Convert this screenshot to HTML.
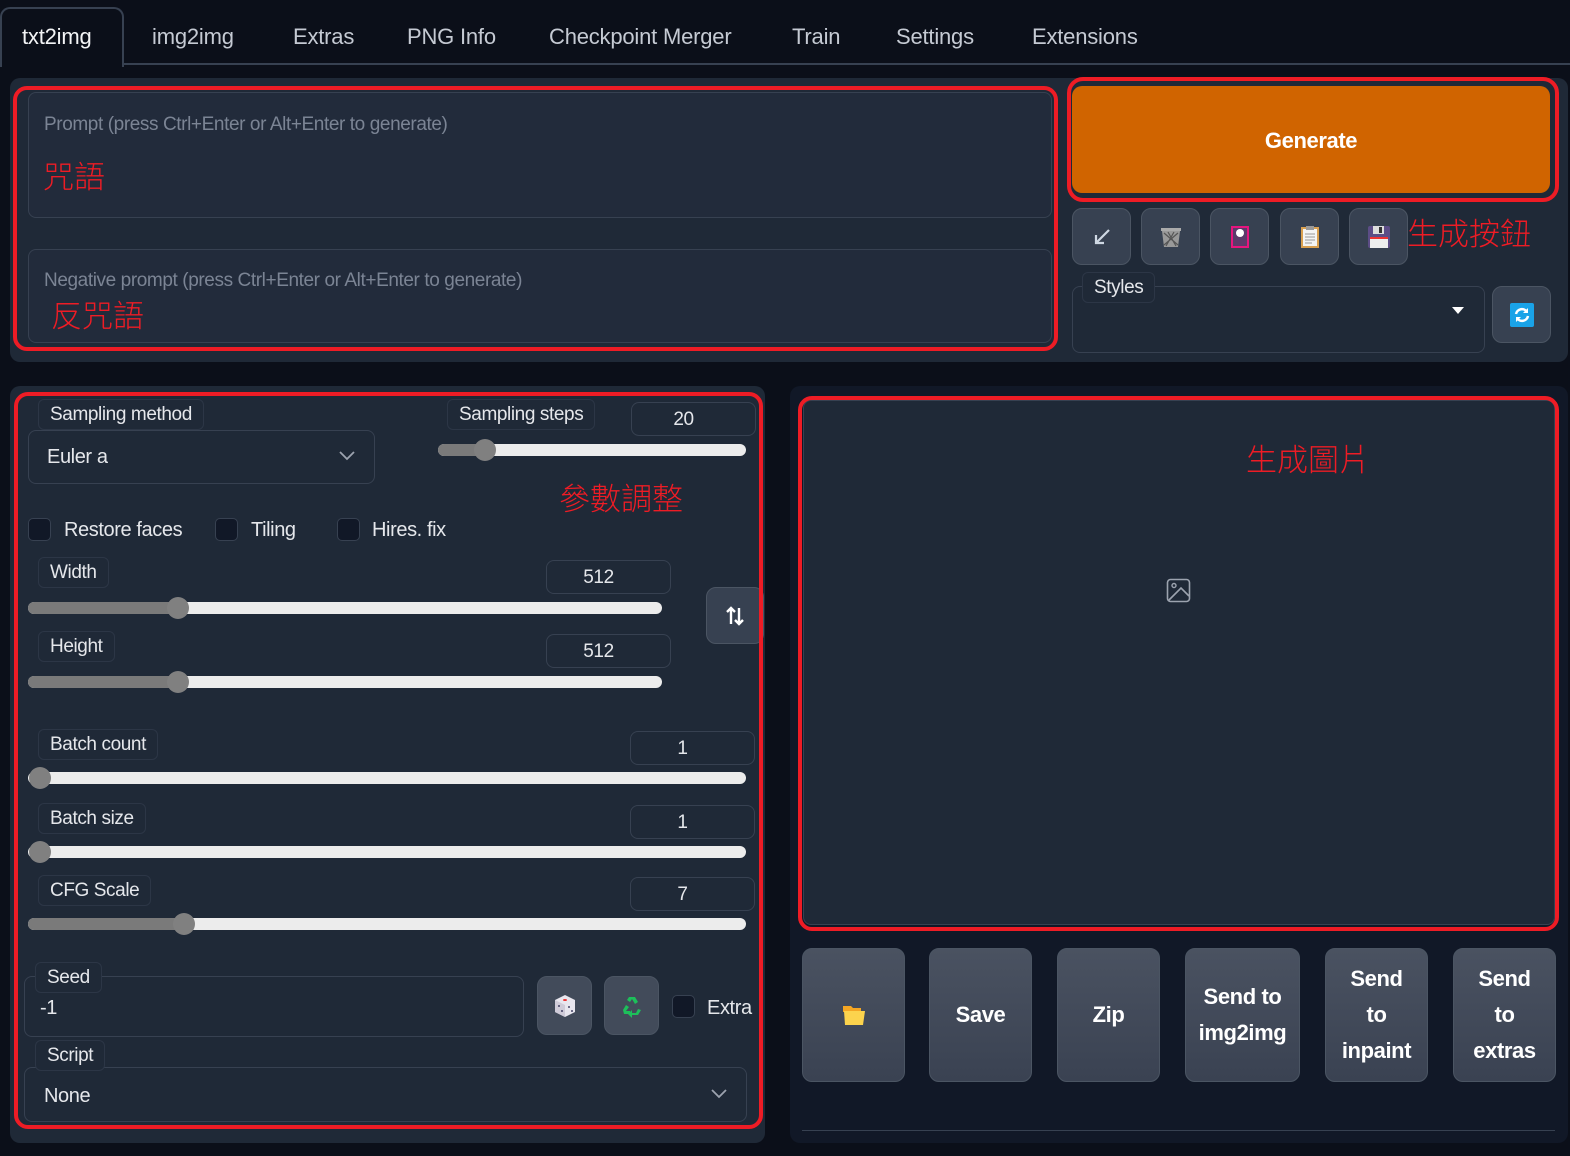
<!DOCTYPE html>
<html><head><meta charset="utf-8"><style>
*{box-sizing:border-box;margin:0;padding:0}
body{width:1570px;height:1156px;background:#0b0f19;font-family:"Liberation Sans","Noto Sans CJK TC",sans-serif;color:#e5e7eb;position:relative;overflow:hidden;letter-spacing:-0.4px}
.a{position:absolute}
.red{position:absolute;border:4px solid #ee1c25;border-radius:14px}
.rt{position:absolute;color:#ee1c25;font-size:31px;font-family:"Noto Sans CJK TC",sans-serif;font-weight:300;line-height:1;letter-spacing:0}
.box{position:absolute;background:#1f2937;border:1px solid #374151;border-radius:8px}
.lbl{position:absolute;background:#1f2937;border:1px solid #2c3646;border-radius:6px;font-size:19px;padding:1px 11px 0;line-height:28px;color:#e5e7eb}
.num{position:absolute;background:#1f2937;border:1px solid #374151;border-radius:8px;font-size:19px;text-align:center;line-height:34px;width:125px;height:34px;padding-right:20px}
.trk{position:absolute;height:12px;border-radius:6px;background:#ececec}
.fill{position:absolute;left:0;top:0;height:12px;border-radius:6px;background:#7a7a7a}
.th{position:absolute;top:-5px;width:22px;height:22px;border-radius:50%;background:#808080}
.btn{position:absolute;background:#374151;border:1px solid #4b5563;border-radius:10px;display:flex;align-items:center;justify-content:center}
.gb{position:absolute;background:linear-gradient(#4a5261,#3a4252);border:1px solid #4b5563;border-radius:10px;display:flex;align-items:center;justify-content:center;text-align:center;font-weight:bold;font-size:22px;line-height:36px;color:#fff;top:948px;height:134px}
.cb{position:absolute;width:23px;height:23px;border:1px solid #374151;background:#111827;border-radius:5px}
.tx{position:absolute;font-size:20px;line-height:1}
.tab{position:absolute;top:26px;font-size:22px;color:#c5cad3;line-height:1;letter-spacing:-0.2px}
</style></head><body>
<div class="a" style="left:0;top:7px;width:124px;height:60px;border:2px solid #374151;border-bottom:none;border-radius:10px 10px 0 0;background:#0b0f19"></div>
<div class="a" style="left:123px;top:63px;width:1447px;height:2px;background:#374151"></div>
<div class="tab" style="left:22px;color:#f3f4f6">txt2img</div>
<div class="tab" style="left:152px">img2img</div>
<div class="tab" style="left:293px">Extras</div>
<div class="tab" style="left:407px">PNG Info</div>
<div class="tab" style="left:549px">Checkpoint Merger</div>
<div class="tab" style="left:792px">Train</div>
<div class="tab" style="left:896px">Settings</div>
<div class="tab" style="left:1032px">Extensions</div>

<div class="a" style="left:10px;top:78px;width:1558px;height:284px;background:#1f2937;border-radius:10px"></div>
<div class="box" style="left:28px;top:92px;width:1024px;height:126px;background:#222b3b"></div>
<div class="tx" style="left:44px;top:115px;font-size:19px;color:#7b8494">Prompt (press Ctrl+Enter or Alt+Enter to generate)</div>
<div class="rt" style="left:43px;top:159px">咒語</div>
<div class="box" style="left:28px;top:249px;width:1024px;height:94px;background:#222b3b"></div>
<div class="tx" style="left:44px;top:271px;font-size:19px;color:#7b8494">Negative prompt (press Ctrl+Enter or Alt+Enter to generate)</div>
<div class="rt" style="left:51px;top:298px">反咒語</div>
<div class="red" style="left:13px;top:86px;width:1045px;height:265px"></div>

<div class="a" style="left:1072px;top:86px;width:478px;height:107px;background:#d06400;border-radius:10px;color:#fff;font-weight:bold;font-size:22px;display:flex;align-items:center;justify-content:center;padding-top:2px">Generate</div>
<div class="red" style="left:1067px;top:77px;width:492px;height:125px;border-radius:16px"></div>

<div class="btn" style="left:1072px;top:208px;width:59px;height:57px"><svg width="22" height="22" viewBox="0 0 22 22"><path d="M18 4L5 17M5 9v8h8" stroke="#cfd8e3" stroke-width="2.2" fill="none"/></svg></div>
<div class="btn" style="left:1141px;top:208px;width:59px;height:57px"><svg width="24" height="24" viewBox="0 0 24 24"><rect x="2" y="3" width="20" height="3" fill="#aaa"/><path d="M3 6h18l-2 16H5z" fill="#999"/><path d="M5 8l14 12M19 8L5 20M9 7l8 14M15 7L7 21" stroke="#555" stroke-width="1.2"/></svg></div>
<div class="btn" style="left:1210px;top:208px;width:59px;height:57px"><svg width="20" height="24" viewBox="0 0 20 24"><rect x="1" y="1" width="18" height="22" fill="#e6157e"/><rect x="3" y="3" width="14" height="18" fill="#5b3a6a"/><circle cx="10" cy="8" r="4" fill="#fff"/></svg></div>
<div class="btn" style="left:1280px;top:208px;width:59px;height:57px"><svg width="20" height="24" viewBox="0 0 20 24"><rect x="1" y="2" width="18" height="21" fill="#d9a050"/><rect x="3" y="4" width="14" height="17" fill="#f4f4f4"/><rect x="6" y="1" width="8" height="4" fill="#999"/><path d="M5 9h10M5 12h10M5 15h10M5 18h7" stroke="#999"/></svg></div>
<div class="btn" style="left:1349px;top:208px;width:59px;height:57px"><svg width="24" height="24" viewBox="0 0 24 24"><rect x="1" y="1" width="22" height="22" rx="2" fill="#5c4d86"/><rect x="6" y="1" width="11" height="8" fill="#ddd"/><rect x="12" y="2" width="3" height="6" fill="#333"/><rect x="3" y="13" width="18" height="10" fill="#eee"/><rect x="3" y="12" width="18" height="2" fill="#e33"/></svg></div>
<div class="rt" style="left:1407px;top:216px">生成按鈕</div>

<div class="box" style="left:1072px;top:286px;width:413px;height:67px"></div>
<div class="lbl" style="left:1082px;top:272px">Styles</div>
<div class="a" style="left:1452px;top:307px;width:0;height:0;border-left:6px solid transparent;border-right:6px solid transparent;border-top:7px solid #fff"></div>
<div class="btn" style="left:1492px;top:286px;width:59px;height:57px"><svg width="24" height="24" viewBox="0 0 24 24"><rect width="24" height="24" rx="2" fill="#1aa3e8"/><path d="M6 11a6 6 0 0 1 11-2M18 13a6 6 0 0 1-11 2" stroke="#fff" stroke-width="2.5" fill="none"/><path d="M18 5v5h-5zM6 19v-5h5z" fill="#fff"/></svg></div>

<div class="a" style="left:10px;top:386px;width:755px;height:757px;background:#1f2937;border-radius:10px"></div>
<div class="box" style="left:28px;top:430px;width:347px;height:54px"></div>
<div class="lbl" style="left:38px;top:399px">Sampling method</div>
<div class="tx" style="left:47px;top:447px">Euler a</div>
<svg class="a" style="left:339px;top:450px" width="16" height="12"><path d="M1 2l7 7 7-7" stroke="#9ca3af" stroke-width="1.8" fill="none"/></svg>
<div class="lbl" style="left:447px;top:399px">Sampling steps</div>
<div class="num" style="left:631px;top:402px">20</div>
<div class="trk" style="left:438px;top:444px;width:308px"><div class="fill" style="width:48px"></div><div class="th" style="left:36px"></div></div>
<div class="rt" style="left:559px;top:481px">參數調整</div>

<div class="cb" style="left:28px;top:518px"></div><div class="tx" style="left:64px;top:520px">Restore faces</div>
<div class="cb" style="left:215px;top:518px"></div><div class="tx" style="left:251px;top:520px">Tiling</div>
<div class="cb" style="left:337px;top:518px"></div><div class="tx" style="left:372px;top:520px">Hires. fix</div>

<div class="lbl" style="left:38px;top:557px">Width</div>
<div class="num" style="left:546px;top:560px">512</div>
<div class="trk" style="left:28px;top:602px;width:634px"><div class="fill" style="width:152px"></div><div class="th" style="left:139px"></div></div>
<div class="lbl" style="left:38px;top:631px">Height</div>
<div class="num" style="left:546px;top:634px">512</div>
<div class="trk" style="left:28px;top:676px;width:634px"><div class="fill" style="width:152px"></div><div class="th" style="left:139px"></div></div>
<div class="btn" style="left:706px;top:587px;width:58px;height:57px;background:#374151"><svg width="22" height="22" viewBox="0 0 22 22"><path d="M7 19V3M3 7l4-4 4 4M15 3v16M11 15l4 4 4-4" stroke="#fff" stroke-width="2.4" fill="none"/></svg></div>

<div class="lbl" style="left:38px;top:729px">Batch count</div>
<div class="num" style="left:630px;top:731px">1</div>
<div class="trk" style="left:28px;top:772px;width:718px"><div class="th" style="left:1px"></div></div>
<div class="lbl" style="left:38px;top:803px">Batch size</div>
<div class="num" style="left:630px;top:805px">1</div>
<div class="trk" style="left:28px;top:846px;width:718px"><div class="th" style="left:1px"></div></div>
<div class="lbl" style="left:38px;top:875px">CFG Scale</div>
<div class="num" style="left:630px;top:877px">7</div>
<div class="trk" style="left:28px;top:918px;width:718px"><div class="fill" style="width:158px"></div><div class="th" style="left:145px"></div></div>

<div class="box" style="left:24px;top:976px;width:500px;height:61px"></div>
<div class="lbl" style="left:35px;top:962px">Seed</div>
<div class="tx" style="left:40px;top:998px">-1</div>
<div class="btn" style="left:537px;top:976px;width:55px;height:59px;background:#424b5a"><svg width="22" height="24" viewBox="0 0 22 24"><path d="M11 1l10 5v12l-10 5-10-5V6z" fill="#e8e6ee"/><path d="M11 11v12L1 18V6z" fill="#cfcbd8"/><ellipse cx="11" cy="6" rx="2" ry="1" fill="#e33"/><circle cx="5" cy="12" r="1" fill="#446"/><circle cx="8" cy="17" r="1" fill="#446"/><circle cx="15" cy="13" r="1" fill="#446"/><circle cx="18" cy="17" r="1" fill="#446"/></svg></div>
<div class="btn" style="left:604px;top:976px;width:55px;height:59px;background:#424b5a"><svg width="24" height="24" viewBox="0 0 24 24"><path d="M9 3h6l3 5-3 2-3-5-2 3-3-2zM3 16l3-5 3 2-3 4h4v3H4zM21 16l-3 5h-6v3l-4-4 4-4v3h4l2-4z" fill="#1dbf5a"/></svg></div>
<div class="cb" style="left:672px;top:995px"></div><div class="tx" style="left:707px;top:998px">Extra</div>

<div class="box" style="left:24px;top:1067px;width:723px;height:55px"></div>
<div class="lbl" style="left:35px;top:1040px">Script</div>
<div class="tx" style="left:44px;top:1086px">None</div>
<svg class="a" style="left:711px;top:1088px" width="16" height="12"><path d="M1 2l7 7 7-7" stroke="#9ca3af" stroke-width="1.8" fill="none"/></svg>
<div class="red" style="left:14px;top:392px;width:749px;height:737px"></div>

<div class="a" style="left:790px;top:386px;width:778px;height:757px;background:#111827;border-radius:10px"></div>
<div class="box" style="left:803px;top:400px;width:752px;height:525px"></div>
<div class="rt" style="left:1246px;top:442px">生成圖片</div>
<svg class="a" style="left:1166px;top:578px" width="25" height="25" viewBox="0 0 25 25"><rect x="1.5" y="1.5" width="22" height="22" rx="3" stroke="#9ca3af" stroke-width="1.6" fill="none"/><circle cx="8" cy="7.5" r="2" stroke="#9ca3af" stroke-width="1.4" fill="none"/><path d="M3 22l12-12 8 8" stroke="#9ca3af" stroke-width="1.6" fill="none"/></svg>
<div class="red" style="left:798px;top:396px;width:761px;height:535px"></div>

<div class="gb" style="left:802px;width:103px"><svg width="24" height="22" viewBox="0 0 24 22"><path d="M1 2h8l2 2h8v4H1z" fill="#f5a623"/><path d="M2 7h21l-2 14H3z" fill="#fcd34d"/></svg></div>
<div class="gb" style="left:929px;width:103px">Save</div>
<div class="gb" style="left:1057px;width:103px">Zip</div>
<div class="gb" style="left:1185px;width:115px">Send to<br>img2img</div>
<div class="gb" style="left:1325px;width:103px">Send<br>to<br>inpaint</div>
<div class="gb" style="left:1453px;width:103px">Send<br>to<br>extras</div>
<div class="a" style="left:802px;top:1130px;width:753px;height:1px;background:#374151"></div>
</body></html>
